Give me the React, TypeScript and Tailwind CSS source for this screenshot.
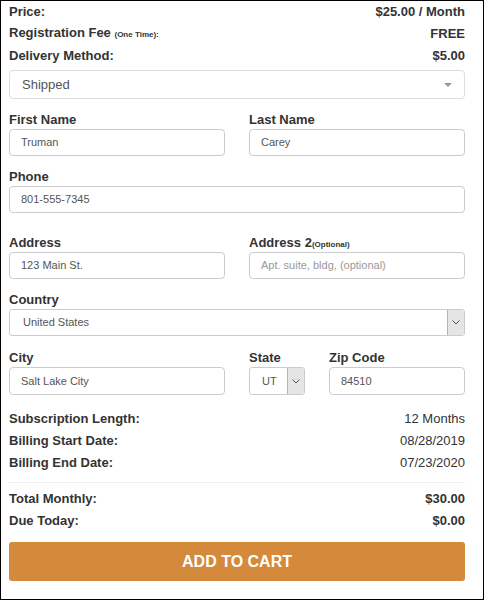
import React from "react";

const font = { fontFamily: '"Liberation Sans", Arial, sans-serif' };

function Chevron() {
  return (
    <svg width="8" height="5" viewBox="0 0 8 5" fill="none">
      <path d="M0.5 0.5 L4 4 L7.5 0.5" stroke="#555" strokeWidth="1" />
    </svg>
  );
}

function SummaryRow({ label, value, strong }: { label: string; value: string; strong?: boolean }) {
  return (
    <div className="flex h-[22px] items-center justify-between text-[13px] leading-[22px] text-[#333]">
      <span className="font-bold">{label}</span>
      <span className={strong ? "font-bold" : ""}>{value}</span>
    </div>
  );
}

function Label({ children, className = "" }: { children: React.ReactNode; className?: string }) {
  return <div className={`h-[18px] text-[13px] font-bold leading-[18px] text-[#333] ${className}`}>{children}</div>;
}

function TextBox({ value, placeholder, className = "" }: { value?: string; placeholder?: string; className?: string }) {
  return (
    <div
      className={`flex h-[27px] items-center rounded-[4px] border border-[#cccccc] bg-white pl-[11px] text-[11px] ${
        value ? "text-[#555]" : "text-[#999]"
      } ${className}`}
    >
      {value ?? placeholder}
    </div>
  );
}

function NativeSelect({ value, className = "", textPad = "pl-[13px]" }: { value: string; className?: string; textPad?: string }) {
  return (
    <div className={`flex rounded-[3px] border border-[#cccccc] bg-white text-[11px] text-[#555] ${className}`}>
      <div className={`flex flex-1 items-center ${textPad}`}>{value}</div>
      <div className="flex w-[17px] items-center justify-center border-l border-[#b3b3b3] bg-[#e5e5e5]">
        <Chevron />
      </div>
    </div>
  );
}

export default function App() {
  return (
    <div style={font} className="h-[600px] w-[484px] border border-black bg-white pl-2 pr-[18px]">
      <div className="flex h-[22px] items-center justify-between text-[13px] font-bold leading-[22px] text-[#333]">
        <span>Price:</span>
        <span>$25.00 / Month</span>
      </div>
      <div className="flex h-[22px] items-center justify-between text-[13px] font-bold leading-[22px] text-[#333]">
        <span>
          Registration Fee <span className="text-[8px]">(One Time):</span>
        </span>
        <span>FREE</span>
      </div>
      <div className="flex h-[22px] items-center justify-between text-[13px] font-bold leading-[22px] text-[#333]">
        <span>Delivery Method:</span>
        <span>$5.00</span>
      </div>

      <div className="mt-[3px] flex h-[29px] items-center justify-between rounded-[4px] border border-[#dddddd] bg-white px-3 text-[13px] text-[#555]">
        <span>Shipped</span>
        <span className="h-0 w-0 border-x-[4.5px] border-t-[4px] border-x-transparent border-t-[#999]" />
      </div>

      <div className="mt-[12px] grid grid-cols-2 gap-x-6">
        <div>
          <Label>First Name</Label>
          <TextBox value="Truman" />
        </div>
        <div>
          <Label>Last Name</Label>
          <TextBox value="Carey" />
        </div>
      </div>

      <div className="mt-[12px]">
        <Label>Phone</Label>
        <TextBox value="801-555-7345" />
      </div>

      <div className="mt-[21px] grid grid-cols-2 gap-x-6">
        <div>
          <Label>Address</Label>
          <TextBox value="123 Main St." />
        </div>
        <div>
          <Label>
            Address 2<span className="text-[8px]">(Optional)</span>
          </Label>
          <TextBox placeholder="Apt. suite, bldg, (optional)" />
        </div>
      </div>

      <div className="mt-[12px]">
        <Label>Country</Label>
        <NativeSelect value="United States" className="h-[27px]" textPad="pl-[13px]" />
      </div>

      <div className="mt-[13px] grid grid-cols-[216px_56px_136px] gap-x-6">
        <div>
          <Label>City</Label>
          <TextBox value="Salt Lake City" className="h-[28px]" />
        </div>
        <div>
          <Label>State</Label>
          <NativeSelect value="UT" className="h-[28px]" textPad="pl-[12px]" />
        </div>
        <div>
          <Label>Zip Code</Label>
          <TextBox value="84510" className="h-[28px]" />
        </div>
      </div>

      <div className="mt-[13px]">
        <SummaryRow label="Subscription Length:" value="12 Months" />
        <SummaryRow label="Billing Start Date:" value="08/28/2019" />
        <SummaryRow label="Billing End Date:" value="07/23/2020" />
      </div>

      <div className="mt-[8px] border-t border-[#eeeeee]" />

      <div className="mt-[5px]">
        <SummaryRow label="Total Monthly:" value="$30.00" strong />
        <SummaryRow label="Due Today:" value="$0.00" strong />
      </div>

      <button
        type="button"
        className="mt-[10px] flex h-[39px] w-full items-center justify-center rounded-[3px] bg-[#d5893a] text-[16px] font-bold text-white"
      >
        ADD TO CART
      </button>
    </div>
  );
}
